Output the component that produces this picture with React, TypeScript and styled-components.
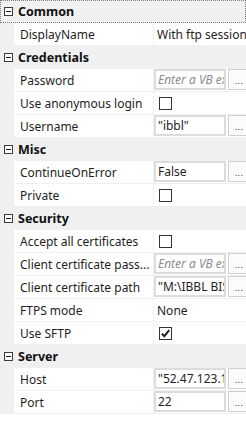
import React from "react";
import styled, { createGlobalStyle } from "styled-components";

const Global = createGlobalStyle`
  html, body { margin: 0; padding: 0; background: #ffffff; }
  body { font-family: "Noto Sans", "Open Sans", sans-serif; }
`;

const Grid = styled.div`
  width: 246px;
  overflow: hidden;
  font-family: "Noto Sans", "Open Sans", sans-serif;
  font-size: 12px;
  color: #1e1e1e;
  background: #ffffff;
`;

const Header = styled.div<{ $focus?: boolean }>`
  position: relative;
  height: 23px;
  box-sizing: border-box;
  display: flex;
  align-items: center;
  background: #f0f0f0;
  ${(p) => (p.$focus ? "outline: 1px dotted #7a7a7a; outline-offset: -1px;" : "")}
`;

const Toggle = styled.span`
  width: 9px;
  height: 9px;
  box-sizing: border-box;
  border: 1px solid #3c3c3c;
  margin-left: 4px;
  margin-right: 5px;
  position: relative;
  flex: none;
  background: #ffffff;
  &::after {
    content: "";
    position: absolute;
    left: 1px;
    right: 1px;
    top: 3px;
    height: 1px;
    background: #1e1e1e;
  }
`;

const Title = styled.span`
  font-weight: 700;
  font-size: 12.5px;
  color: #111;
`;

const Row = styled.div`
  display: grid;
  grid-template-columns: 14px 140px 1fr;
  height: 23px;
  box-sizing: border-box;
  background: #ffffff;
`;

const Strip = styled.div`
  background: #f0f0f0;
`;

const Name = styled.div`
  display: flex;
  align-items: center;
  padding-left: 6px;
  border-right: 1px solid #f0f0f0;
  border-bottom: 1px solid #f0f0f0;
  white-space: nowrap;
  overflow: hidden;
`;

const Value = styled.div`
  display: flex;
  align-items: center;
  gap: 2px;
  padding-left: 3px;
  border-bottom: 1px solid #f0f0f0;
  white-space: nowrap;
  overflow: hidden;
  min-width: 0;
`;

const BoxValue = styled.div`
  display: flex;
  align-items: stretch;
  gap: 2px;
  padding: 0 0 1px 0;
  border-bottom: 1px solid #f0f0f0;
  overflow: hidden;
  min-width: 0;
`;

const Input = styled.div<{ $placeholder?: boolean }>`
  width: 72px;
  flex: none;
  box-sizing: border-box;
  border: 2px solid #dcdcdc;
  display: flex;
  align-items: center;
  padding-left: 2px;
  overflow: hidden;
  white-space: nowrap;
  color: ${(p) => (p.$placeholder ? "#8c8c8c" : "#1e1e1e")};
  font-style: ${(p) => (p.$placeholder ? "italic" : "normal")};
`;

const Dots = styled.div`
  width: 22px;
  flex: none;
  box-sizing: border-box;
  border: 1px solid #cfcfcf;
  background: #fbfbfb;
  display: flex;
  align-items: flex-end;
  justify-content: center;
  padding-bottom: 4px;
  font-size: 9px;
  line-height: 9px;
  color: #333;
  letter-spacing: 0.5px;
`;

const Check = styled.span`
  width: 13px;
  height: 13px;
  box-sizing: border-box;
  border: 1px solid #333333;
  background: #ffffff;
  margin-left: 2px;
  display: flex;
  align-items: center;
  justify-content: center;
`;

type Prop =
  | { name: string; kind: "text"; value: string }
  | { name: string; kind: "input"; value: string; placeholder?: boolean }
  | { name: string; kind: "check"; checked: boolean };

type Cat = { title: string; props: Prop[] };

const data: Cat[] = [
  { title: "Common", props: [{ name: "DisplayName", kind: "text", value: "With ftp session" }] },
  {
    title: "Credentials",
    props: [
      { name: "Password", kind: "input", value: "Enter a VB expression", placeholder: true },
      { name: "Use anonymous login", kind: "check", checked: false },
      { name: "Username", kind: "input", value: "\"ibbl\"" },
    ],
  },
  {
    title: "Misc",
    props: [
      { name: "ContinueOnError", kind: "input", value: "False" },
      { name: "Private", kind: "check", checked: false },
    ],
  },
  {
    title: "Security",
    props: [
      { name: "Accept all certificates", kind: "check", checked: false },
      { name: "Client certificate pass...", kind: "input", value: "Enter a VB expression", placeholder: true },
      { name: "Client certificate path", kind: "input", value: "\"M:\\IBBL BISEC\\cert.pfx\"" },
      { name: "FTPS mode", kind: "text", value: "None" },
      { name: "Use SFTP", kind: "check", checked: true },
    ],
  },
  {
    title: "Server",
    props: [
      { name: "Host", kind: "input", value: "\"52.47.123.1\"" },
      { name: "Port", kind: "input", value: "22" },
    ],
  },
];

function PropValue({ p }: { p: Prop }) {
  if (p.kind === "input") {
    return (
      <BoxValue>
        <Input $placeholder={p.placeholder}>{p.value}</Input>
        <Dots>...</Dots>
      </BoxValue>
    );
  }
  if (p.kind === "check") {
    return (
      <Value>
        <Check>
          {p.checked && (
            <svg width="11" height="11" viewBox="0 0 11 11">
              <path d="M1.8 5.6 L4.3 8.2 L9.2 2.2" fill="none" stroke="#1e1e1e" strokeWidth="1.9" />
            </svg>
          )}
        </Check>
      </Value>
    );
  }
  return <Value>{p.value}</Value>;
}

export default function App() {
  return (
    <>
      <Global />
      <Grid>
        {data.map((c, ci) => (
          <React.Fragment key={c.title}>
            <Header $focus={ci === 0}>
              <Toggle />
              <Title>{c.title}</Title>
            </Header>
            {c.props.map((p) => (
              <Row key={p.name}>
                <Strip />
                <Name>{p.name}</Name>
                <PropValue p={p} />
              </Row>
            ))}
          </React.Fragment>
        ))}
      </Grid>
    </>
  );
}
